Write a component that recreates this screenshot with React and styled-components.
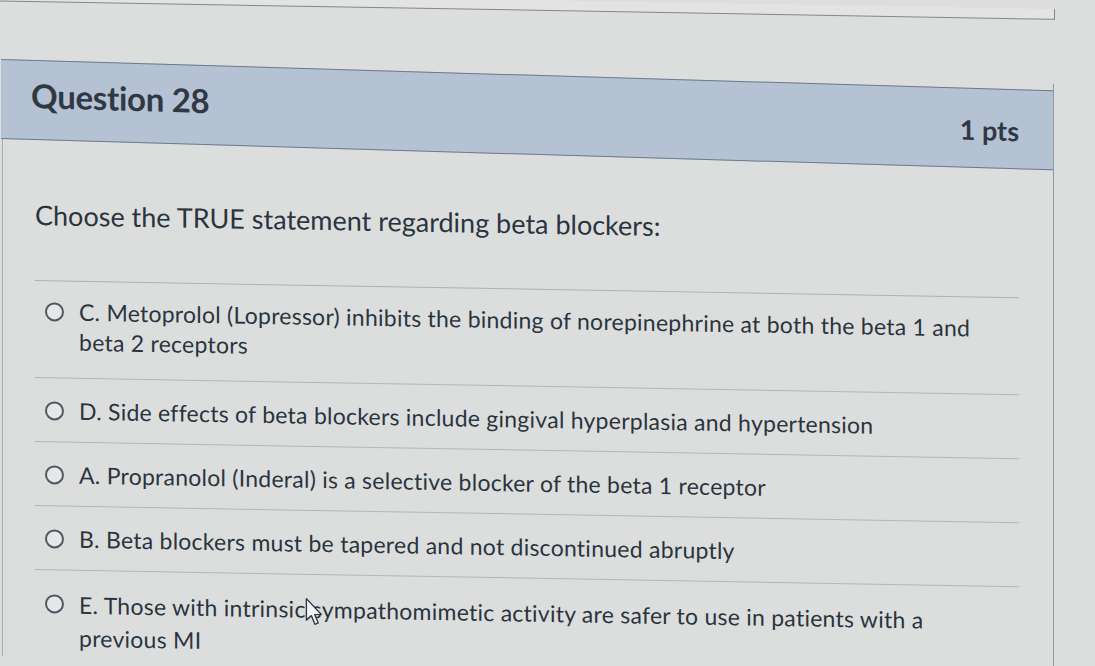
import React from 'react';
import styled, { createGlobalStyle } from 'styled-components';

const GlobalStyle = createGlobalStyle`
  html, body {
    margin: 0;
    padding: 0;
    background: #dcdedd;
    font-family: Lato, "Open Sans", sans-serif;
    color: #2f3944;
    overflow: hidden;
  }
`;

// the screenshot is a photo taken at a slight angle, so the whole sheet is skewed a little
const Page = styled.div`
  width: 1095px;
  height: 666px;
  overflow: hidden;
  position: relative;
  transform: skewY(1deg);
  transform-origin: 547px 333px;
`;

const TopBox = styled.div`
  width: 1054px;
  height: 10px;
  background: #e2e3e2;
  border-right: 1px solid #7d8796;
  border-bottom: 1px solid #7d8796;
`;

const Card = styled.section`
  margin-top: 64px;
  margin-left: 2px;
  width: 1050px;
  height: 640px;
  border-right: 1px solid #8f99a6;
  border-left: 1px solid #a3abb4;
`;

const Header = styled.header`
  height: 80px;
  margin-left: -2px;
  width: 1052px;
  background: #b4c2d3;
  border-top: 1px solid #6f7b8d;
  border-bottom: 1px solid #6f7b8d;
  display: flex;
  justify-content: space-between;
  align-items: flex-start;
  padding: 14px 34px 0 30px;
  box-sizing: border-box;
  transform: skewY(0.7deg);
  transform-origin: 527px 40px;
`;

const Title = styled.h2`
  margin: 0;
  font-size: 33px;
  line-height: 40px;
  font-weight: 700;
  color: #303943;
  letter-spacing: -0.3px;
`;

const Points = styled.div`
  font-size: 27px;
  line-height: 34px;
  font-weight: 700;
  color: #303943;
  margin-top: 10px;
`;

const Body = styled.div`
  padding: 52px 34px 0 32px;
`;

const Prompt = styled.p`
  margin: 0 0 48px;
  font-size: 27px;
  line-height: 34px;
  color: #2b343e;
`;

const AnswerList = styled.ul`
  list-style: none;
  margin: 0;
  padding: 0;
  border-top: 1px solid #a9b1b8;
`;

const Answer = styled.li`
  display: flex;
  align-items: flex-start;
  padding: ${(p) => p.$pad};
  border-bottom: 1px solid #b0b7bd;
`;

const Radio = styled.span`
  flex: none;
  width: 15px;
  height: 15px;
  margin-top: 6px;
  border: 2px solid #4f5862;
  border-radius: 50%;
  background: #e6e8e7;
`;

const Label = styled.span`
  margin-left: 15px;
  max-width: 910px;
  font-size: 23px;
  line-height: ${(p) => (p.$loose ? '33px' : '30px')};
  letter-spacing: 0.25px;
  color: #2b343e;
`;

const Cursor = styled.svg`
  position: absolute;
  left: 305px;
  top: 601px;
  width: 18px;
  height: 30px;
`;

const answers = [
  {
    text: 'C. Metoprolol (Lopressor) inhibits the binding of norepinephrine at both the beta 1 and beta 2 receptors',
    pad: '15px 0 21px 10px',
  },
  { text: 'D. Side effects of beta blockers include gingival hyperplasia and hypertension', pad: '17px 0 16px 10px' },
  { text: 'A. Propranolol (Inderal) is a selective blocker of the beta 1 receptor', pad: '17px 0 16px 10px' },
  { text: 'B. Beta blockers must be tapered and not discontinued abruptly', pad: '17px 0 16px 10px' },
  {
    text: 'E. Those with intrinsic sympathomimetic activity are safer to use in patients with a previous MI',
    pad: '18px 0 20px 10px',
    loose: true,
  },
];

const App = () => {
  return (
    <Page>
      <GlobalStyle />
      <TopBox />
      <Card>
        <Header>
          <Title>Question 28</Title>
          <Points>1 pts</Points>
        </Header>
        <Body>
          <Prompt>Choose the TRUE statement regarding beta blockers:</Prompt>
          <AnswerList>
            {answers.map((a, i) => (
              <Answer key={i} $pad={a.pad}>
                <Radio />
                <Label $loose={a.loose}>{a.text}</Label>
              </Answer>
            ))}
          </AnswerList>
        </Body>
      </Card>
      <Cursor viewBox="0 0 13 21">
        <path
          d="M1 1 L1 16.5 L4.6 13.2 L7.2 19.4 L9.6 18.4 L7 12.4 L11.8 12.2 Z"
          fill="#f2f3f2"
          stroke="#2f3944"
          strokeWidth="1"
          strokeLinejoin="round"
        />
      </Cursor>
    </Page>
  );
};

export default App;
